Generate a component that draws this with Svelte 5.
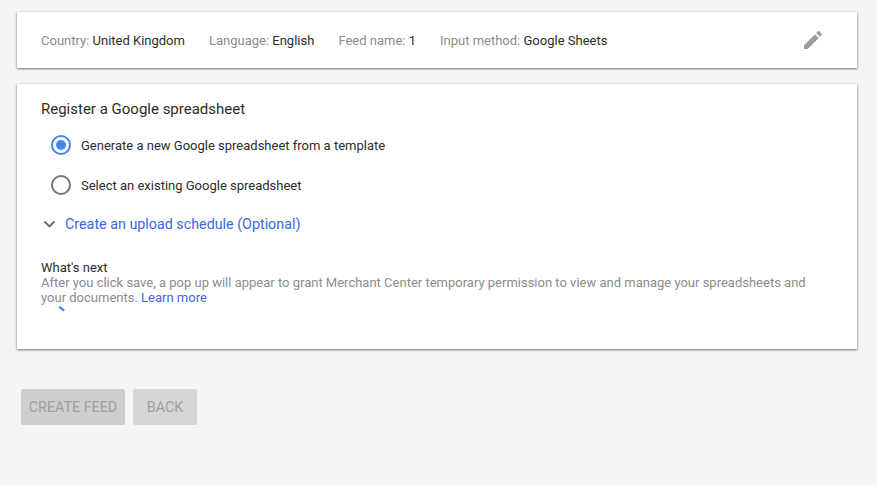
<script>
  const META = [
    { label: 'Country:', value: 'United Kingdom' },
    { label: 'Language:', value: 'English' },
    { label: 'Feed name:', value: '1' },
    { label: 'Input method:', value: 'Google Sheets' },
  ]
</script>

<div class="page">
  <section class="card summary">
    <div class="meta">
      {#each META as { label, value }}
        <span class="meta-item"><span class="label">{label}</span> {value}</span>
      {/each}
    </div>
    <svg class="edit" viewBox="0 0 24 24" aria-label="Edit">
      <path d="M3 17.25V21h3.75L17.81 9.94l-3.75-3.75L3 17.25zM20.71 7.04a1 1 0 0 0 0-1.41l-2.34-2.34a1 1 0 0 0-1.41 0l-1.83 1.83 3.75 3.75 1.83-1.83z" />
    </svg>
  </section>

  <section class="card register">
    <h2>Register a Google spreadsheet</h2>

    <div class="radio-row">
      <span class="radio checked"></span>
      <span>Generate a new Google spreadsheet from a template</span>
    </div>
    <div class="radio-row">
      <span class="radio"></span>
      <span>Select an existing Google spreadsheet</span>
    </div>

    <div class="schedule">
      <svg class="chevron" viewBox="0 0 12 8">
        <path d="M1 1.5l5 5 5-5" />
      </svg>
      <span>Create an upload schedule (Optional)</span>
    </div>

    <div class="next">
      <div class="next-title">What's next</div>
      <p>After you click save, a pop up will appear to grant Merchant Center temporary permission to view and manage your spreadsheets and your documents. <span class="link">Learn more</span></p>
      <svg class="spinner" viewBox="0 0 8 7">
        <path d="M1 1.2c1.6.4 3 1.4 5 3.6" />
      </svg>
    </div>
  </section>

  <div class="actions">
    <button class="create" disabled>CREATE FEED</button>
    <button class="back" disabled>BACK</button>
  </div>
</div>

<style>
  :global(body) {
    margin: 0;
    background: #f5f5f5;
  }

  .page {
    box-sizing: border-box;
    height: 485px;
    padding: 12px 20px 0 17px;
    font-family: Roboto, "Liberation Sans", sans-serif;
    font-size: 13px;
    color: #2c2c2c;
    overflow: hidden;
  }

  .card {
    background: #fff;
    box-shadow: 0 1px 2px rgba(0, 0, 0, 0.5), 0 0 3px rgba(0, 0, 0, 0.12);
  }

  .summary {
    display: flex;
    align-items: center;
    justify-content: space-between;
    height: 56px;
    padding: 0 32px 0 24px;
    margin-bottom: 16px;
  }

  .meta {
    display: flex;
    gap: 24px;
  }

  .label {
    color: #8c8c8c;
  }

  .edit {
    width: 24px;
    height: 24px;
    fill: #9e9e9e;
  }

  .register {
    box-sizing: border-box;
    height: 265px;
    padding: 16px 24px 0;
  }

  h2 {
    margin: 0;
    font-size: 15px;
    font-weight: 400;
    line-height: 18px;
  }

  .radio-row {
    display: flex;
    align-items: center;
    gap: 10px;
    height: 20px;
    margin: 0 0 20px 10px;
  }
  h2 + .radio-row {
    margin-top: 17px;
  }

  .radio {
    box-sizing: border-box;
    width: 20px;
    height: 20px;
    border: 2px solid #757575;
    border-radius: 50%;
    display: flex;
    align-items: center;
    justify-content: center;
  }
  .radio.checked {
    border-color: #4285f4;
  }
  .radio.checked::after {
    content: '';
    width: 10px;
    height: 10px;
    border-radius: 50%;
    background: #4285f4;
  }

  .schedule {
    display: flex;
    align-items: center;
    gap: 9px;
    margin-top: -1px;
    color: #3f67d8;
    font-size: 14.3px;
    line-height: 20px;
  }

  .chevron {
    width: 13px;
    height: 8px;
    margin-left: 2px;
    fill: none;
    stroke: #5f6f80;
    stroke-width: 1.8;
  }

  .next {
    position: relative;
    margin-top: 26px;
    line-height: 15px;
  }

  .next p {
    margin: 0;
    color: #8c8c8c;
  }

  .link {
    color: #3f67d8;
  }

  .spinner {
    position: absolute;
    left: 17px;
    top: 46px;
    width: 8px;
    height: 7px;
    fill: none;
    stroke: #4285f4;
    stroke-width: 2.4;
  }

  .actions {
    display: flex;
    gap: 8px;
    margin: 40px 0 0 4px;
  }

  button {
    height: 36px;
    border: none;
    border-radius: 2px;
    padding: 0;
    font-family: inherit;
    font-size: 14.3px;
    font-weight: 400;
    color: #a0a0a0;
  }

  .create {
    width: 104px;
    background: #cecece;
  }

  .back {
    width: 64px;
    background: #d6d6d6;
  }
</style>
